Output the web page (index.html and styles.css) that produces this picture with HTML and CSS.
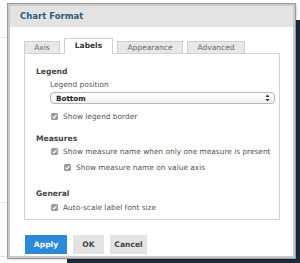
FILE: index.html
```html
<!DOCTYPE html>
<html>
<head>
<meta charset="utf-8">
<link rel="stylesheet" href="styles.css">
</head>
<body>
<div class="backdrop">
  <div class="bg-row r1"></div>
  <div class="bg-row r2"></div>
  <div class="bg-row r3"></div>
</div>
<div class="navy-panel"></div>
<div class="dialog">
  <div class="title-bar">Chart Format</div>
  <div class="dialog-body">
    <div class="tabs">
      <div class="tab t-axis">Axis</div>
      <div class="tab active t-labels">Labels</div>
      <div class="tab t-appear">Appearance</div>
      <div class="tab t-adv">Advanced</div>
    </div>
    <div class="panel">
      <div class="section-title">Legend</div>
      <div class="field-label">Legend position</div>
      <div class="select">
        <span class="select-value">Bottom</span>
        <svg class="select-arrows" width="5" height="8" viewBox="0 0 5 8"><path d="M2.5 0.5 L4.5 3 L0.5 3 Z M2.5 7.5 L4.5 5 L0.5 5 Z" fill="#333"/></svg>
      </div>
      <div class="check-row cr-legend"><span class="cb"><svg width="7" height="7" viewBox="0 0 7 7"><path d="M1.6 3.6 L3 5 L5.5 1.9" fill="none" stroke="#fff" stroke-width="1.1"/></svg></span>Show legend border</div>
      <div class="section-title st-measures">Measures</div>
      <div class="check-row cr-m1"><span class="cb"><svg width="7" height="7" viewBox="0 0 7 7"><path d="M1.6 3.6 L3 5 L5.5 1.9" fill="none" stroke="#fff" stroke-width="1.1"/></svg></span>Show measure name when only one measure is present</div>
      <div class="check-row nested cr-m2"><span class="cb"><svg width="7" height="7" viewBox="0 0 7 7"><path d="M1.6 3.6 L3 5 L5.5 1.9" fill="none" stroke="#fff" stroke-width="1.1"/></svg></span>Show measure name on value axis</div>
      <div class="section-title st-general">General</div>
      <div class="check-row cr-g1"><span class="cb"><svg width="7" height="7" viewBox="0 0 7 7"><path d="M1.6 3.6 L3 5 L5.5 1.9" fill="none" stroke="#fff" stroke-width="1.1"/></svg></span>Auto-scale label font size</div>
    </div>
    <div class="buttons">
      <div class="btn primary">Apply</div>
      <div class="btn">OK</div>
      <div class="btn">Cancel</div>
    </div>
  </div>
</div>
</body>
</html>
```
FILE: styles.css
```css
html, body {
  margin: 0;
  padding: 0;
  width: 300px;
  height: 263px;
  overflow: hidden;
  background: #ffffff;
  font-family: "DejaVu Sans", Verdana, sans-serif;
  position: relative;
}

.backdrop {
  position: absolute;
  left: 0; top: 0; right: 0; bottom: 0;
  background: #fdfdfd;
}
.bg-row {
  position: absolute;
  left: 0;
  width: 100px;
  height: 1px;
  background: #e4e4e4;
}
.r1 { top: 37px; }
.r2 { top: 202px; }
.r3 { top: 256px; }

.navy-panel {
  position: absolute;
  left: 67px;
  top: 20px;
  right: 0;
  bottom: 0;
  background: #1b2b3b;
}

.dialog {
  position: absolute;
  left: 8px;
  top: 4px;
  width: 283px;
  height: 250px;
  background: #fff;
  border: 2px solid #c9c9c9;
  box-shadow: 0 0 0 1px #9a9a9a, 1px 1px 2px rgba(0,0,0,0.35);
  display: flex;
  flex-direction: column;
}

.title-bar {
  height: 21px;
  background: #e3e3e3;
  color: #2a5c7e;
  font-weight: bold;
  font-size: 8.5px;
  line-height: 21px;
  padding-left: 10px;
  flex: none;
}

.dialog-body {
  flex: 1;
  padding: 12px 11px 0 14px;
  display: flex;
  flex-direction: column;
}

.tabs {
  display: flex;
  align-items: flex-end;
  height: 14px;
  position: relative;
  z-index: 2;
}
.tab {
  box-sizing: border-box;
  height: 12px;
  margin-right: 4px;
  background: #e8e8e8;
  border: 1px solid #cfcfcf;
  border-bottom: none;
  color: #666;
  font-size: 7.5px;
  line-height: 11px;
  text-align: center;
}
.t-axis { width: 36px; }
.t-labels { width: 49px; }
.t-appear { width: 66px; }
.t-adv { width: 58px; }
.tab.active {
  height: 16px;
  margin-bottom: -1px;
  background: #fff;
  color: #333;
  font-weight: bold;
  line-height: 14px;
}

.panel {
  box-sizing: border-box;
  width: 256px;
  height: 167px;
  border: 1px solid #d2d2d2;
  padding: 12px 0 0 11px;
  color: #555;
  font-size: 7.4px;
}

.section-title {
  font-weight: bold;
  color: #444;
  font-size: 7.6px;
  line-height: 11px;
  height: 11px;
}
.st-measures { margin-top: 11px; }
.st-general { margin-top: 15px; }

.field-label {
  margin-top: 2px;
  margin-left: 14px;
  line-height: 11px;
  height: 11px;
}

.select {
  box-sizing: border-box;
  margin-top: 2px;
  margin-left: 14px;
  width: 225px;
  height: 12px;
  border: 1px solid #b8b8b8;
  border-radius: 4px;
  background: linear-gradient(#ffffff, #f1f1f1);
  display: flex;
  align-items: center;
  justify-content: space-between;
  padding: 0 4px 0 5px;
}
.select-value {
  color: #222;
  font-weight: bold;
  font-size: 7.2px;
}
.select-arrows { display: block; }

.check-row {
  display: flex;
  align-items: center;
  height: 11px;
  margin-left: 15px;
  line-height: 11px;
  white-space: nowrap;
}
.cb {
  width: 7px;
  height: 7px;
  border-radius: 1.5px;
  background: #9b9b9b;
  margin-right: 5px;
  display: flex;
  align-items: center;
  justify-content: center;
  flex: none;
}
.cb svg { display: block; }
.cr-legend { margin-top: 7px; }
.cr-m1 { margin-top: 2px; }
.cr-m2 { margin-top: 5px; }
.nested { margin-left: 28px; }
.cr-g1 { margin-top: 3px; }

.buttons {
  display: flex;
  gap: 6px;
  margin-top: 15px;
  margin-left: 1px;
}
.btn {
  box-sizing: border-box;
  height: 19px;
  padding: 0;
  background: #e3e3e3;
  color: #444;
  font-weight: bold;
  font-size: 7.6px;
  line-height: 19px;
  text-align: center;
}
.btn.primary {
  background: #2c88d8;
  color: #fff;
  width: 42px;
}
.btn:nth-child(2) { width: 31px; }
.btn:nth-child(3) { width: 37px; }
```
